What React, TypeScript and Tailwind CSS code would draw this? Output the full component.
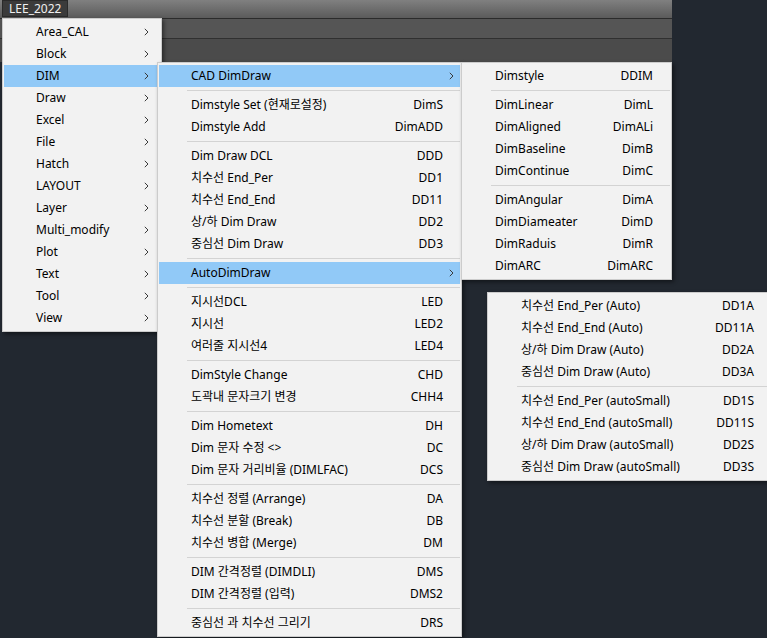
import { Fragment } from "react";

type Item = { label: string; cmd?: string; sub?: boolean; active?: boolean };

const mainMenu: Item[][] = [
  [
    { label: "Area_CAL", sub: true },
    { label: "Block", sub: true },
    { label: "DIM", sub: true, active: true },
    { label: "Draw", sub: true },
    { label: "Excel", sub: true },
    { label: "File", sub: true },
    { label: "Hatch", sub: true },
    { label: "LAYOUT", sub: true },
    { label: "Layer", sub: true },
    { label: "Multi_modify", sub: true },
    { label: "Plot", sub: true },
    { label: "Text", sub: true },
    { label: "Tool", sub: true },
    { label: "View", sub: true },
  ],
];

const dimMenu: Item[][] = [
  [{ label: "CAD DimDraw", sub: true, active: true }],
  [
    { label: "Dimstyle Set (현재로설정)", cmd: "DimS" },
    { label: "Dimstyle Add", cmd: "DimADD" },
  ],
  [
    { label: "Dim Draw DCL", cmd: "DDD" },
    { label: "치수선 End_Per", cmd: "DD1" },
    { label: "치수선 End_End", cmd: "DD11" },
    { label: "상/하 Dim Draw", cmd: "DD2" },
    { label: "중심선 Dim Draw", cmd: "DD3" },
  ],
  [{ label: "AutoDimDraw", sub: true, active: true }],
  [
    { label: "지시선DCL", cmd: "LED" },
    { label: "지시선", cmd: "LED2" },
    { label: "여러줄 지시선4", cmd: "LED4" },
  ],
  [
    { label: "DimStyle Change", cmd: "CHD" },
    { label: "도곽내 문자크기 변경", cmd: "CHH4" },
  ],
  [
    { label: "Dim Hometext", cmd: "DH" },
    { label: "Dim 문자 수정 <>", cmd: "DC" },
    { label: "Dim 문자 거리비율 (DIMLFAC)", cmd: "DCS" },
  ],
  [
    { label: "치수선 정렬 (Arrange)", cmd: "DA" },
    { label: "치수선 분할 (Break)", cmd: "DB" },
    { label: "치수선 병합 (Merge)", cmd: "DM" },
  ],
  [
    { label: "DIM 간격정렬 (DIMDLI)", cmd: "DMS" },
    { label: "DIM 간격정렬 (입력)", cmd: "DMS2" },
  ],
  [{ label: "중심선 과 치수선 그리기", cmd: "DRS" }],
];

const cadMenu: Item[][] = [
  [{ label: "Dimstyle", cmd: "DDIM" }],
  [
    { label: "DimLinear", cmd: "DimL" },
    { label: "DimAligned", cmd: "DimALi" },
    { label: "DimBaseline", cmd: "DimB" },
    { label: "DimContinue", cmd: "DimC" },
  ],
  [
    { label: "DimAngular", cmd: "DimA" },
    { label: "DimDiameater", cmd: "DimD" },
    { label: "DimRaduis", cmd: "DimR" },
    { label: "DimARC", cmd: "DimARC" },
  ],
];

const autoMenu: Item[][] = [
  [
    { label: "치수선 End_Per (Auto)", cmd: "DD1A" },
    { label: "치수선 End_End (Auto)", cmd: "DD11A" },
    { label: "상/하 Dim Draw (Auto)", cmd: "DD2A" },
    { label: "중심선 Dim Draw (Auto)", cmd: "DD3A" },
  ],
  [
    { label: "치수선 End_Per (autoSmall)", cmd: "DD1S" },
    { label: "치수선 End_End (autoSmall)", cmd: "DD11S" },
    { label: "상/하 Dim Draw (autoSmall)", cmd: "DD2S" },
    { label: "중심선 Dim Draw (autoSmall)", cmd: "DD3S" },
  ],
];

function Chevron() {
  return (
    <svg width="5" height="8" viewBox="0 0 5 8" className="shrink-0">
      <path d="M0.8 0.8 L4 4 L0.8 7.2" fill="none" stroke="#3a3a3a" strokeWidth="1" />
    </svg>
  );
}

function Menu({ sections, className, arrowPad }: { sections: Item[][]; className: string; arrowPad: string }) {
  return (
    <div className={`absolute border border-[#cccccc] bg-[#f2f2f2] px-px py-[2px] shadow-[2px_2px_4px_rgba(0,0,0,0.45)] ${className}`}>
      {sections.map((section, i) => (
        <Fragment key={i}>
          {i > 0 && (
            <div className="py-[3px] pl-[28px]">
              <div className="h-px bg-[#d3d3d3]" />
            </div>
          )}
          {section.map((item) => (
            <div
              key={item.label}
              className={`flex h-[22px] items-center pl-[32px] ${item.sub ? arrowPad : "pr-[17px]"} ${item.active ? "bg-[#91c9f7]" : ""}`}
            >
              <span className="flex-1 whitespace-nowrap">{item.label}</span>
              {item.cmd && <span className="whitespace-nowrap">{item.cmd}</span>}
              {item.sub && <Chevron />}
            </div>
          ))}
        </Fragment>
      ))}
    </div>
  );
}

export default function App() {
  return (
    <div className="relative h-[638px] w-[767px] overflow-hidden bg-[#222830] font-['Noto_Sans','Noto_Sans_CJK_KR',sans-serif] text-[12px] text-black">
      <div className="flex h-[62px] w-[672px] flex-col">
        <div className="flex h-[18px] items-start bg-linear-to-b from-[#808080] to-[#5b5b5b] pl-[2px]">
          <div className="flex h-[17px] items-center border border-[#2a2a2a] bg-[#3b3b3b] px-[6px] leading-none text-[#f0f0f0]">
            LEE_2022
          </div>
        </div>
        <div className="h-px bg-[#2b2b2b]" />
        <div className="h-[19px] bg-[#555555]" />
        <div className="h-px bg-[#303030]" />
        <div className="flex-1 bg-[#4b4b4b]" />
      </div>

      <Menu sections={mainMenu} className="left-[2px] top-[18px] w-[160px]" arrowPad="pr-[11px]" />
      <Menu sections={dimMenu} className="left-[157px] top-[62px] w-[305px]" arrowPad="pr-[6px]" />
      <Menu sections={cadMenu} className="left-[461px] top-[62px] w-[211px]" arrowPad="pr-[6px]" />
      <Menu sections={autoMenu} className="left-[487px] top-[292px] w-[286px]" arrowPad="pr-[6px]" />
    </div>
  );
}
